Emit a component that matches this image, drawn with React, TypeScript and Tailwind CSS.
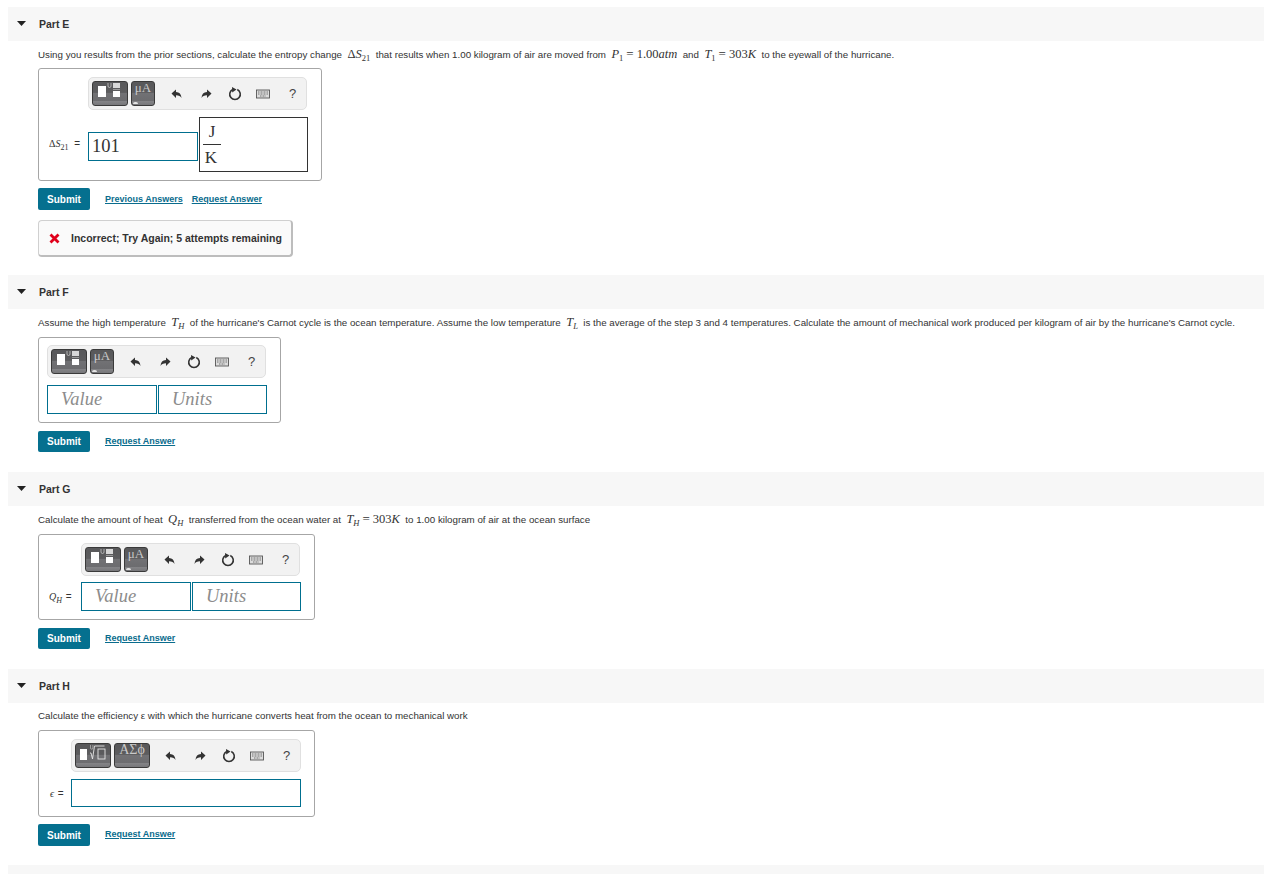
import type { ReactNode } from 'react'

const serif = 'font-["Liberation_Serif",serif]'

function V({ children, sub, upright }: { children: ReactNode; sub?: string; upright?: boolean }) {
    return (
        <span className={`${serif} italic text-[12.5px] text-[#333]`}>
            {children}
            {sub && <sub className={`text-[8.5px] align-[-1px] leading-none ${upright ? 'not-italic' : ''}`}>{sub}</sub>}
        </span>
    )
}

function Num({ children }: { children: ReactNode }) {
    return <span className={`${serif} text-[12.5px] text-[#333]`}>{children}</span>
}

function Eq() {
    return <span className={`${serif} mx-[3px] text-[13px] text-[#333]`}>=</span>
}

function TemplateIcon({ root }: { root?: boolean }) {
    if (root) {
        return (
            <svg width="36" height="25" viewBox="0 0 36 25" className="absolute left-0 top-0">
                <rect x="4" y="5" width="7" height="11" fill="#fff" />
                <path d="M14 9l1 0 1.500 6 2-13h10" stroke="#e6e6e6" strokeWidth="0.9" fill="none" />
                <rect x="22" y="5" width="7" height="10" fill="none" stroke="#e6e6e6" strokeWidth="0.9" />
                <path d="M14.500 1v3a1.200 1.200 0 0 0 2.400 0v-3" stroke="#d0d0d0" strokeWidth="0.6" fill="none" />
            </svg>
        )
    }
    return (
        <svg width="36" height="25" viewBox="0 0 36 25" className="absolute left-0 top-0">
            <rect x="5" y="4" width="8" height="11" fill="#fff" />
            <path d="M15 1v3a1.500 1.500 0 0 0 3 0v-3" stroke="#c8c8c8" strokeWidth="0.8" fill="none" />
            <rect x="20" y="1" width="7" height="5" fill="#d8d8d8" />
            <rect x="20" y="7" width="7" height="0.8" fill="#aaa" />
            <rect x="20" y="9" width="7" height="6" fill="#fff" />
        </svg>
    )
}

function PadButton({ className, children }: { className: string; children: ReactNode }) {
    return (
        <div className={`relative h-[25px] rounded-[3px] border border-[#3a3a3a] overflow-hidden bg-[linear-gradient(#58585a_0%,#5c5c5e_45%,#717174_50%,#6c6c6f_82%,#838386_84%,#77777a_100%)] ${className}`}>
            {children}
        </div>
    )
}

function Toolbar({ className, greek }: { className: string; greek?: boolean }) {
    return (
        <div className={`flex items-center h-[33px] pl-[3px] rounded-[5px] border border-[#e0e0e0] bg-[#f2f2f2] ${className}`}>
            <PadButton className="w-[36px] shrink-0">
                <TemplateIcon root={greek} />
            </PadButton>
            <PadButton className={`ml-[3px] shrink-0 ${greek ? 'w-[36px]' : 'w-[24px]'}`}>
                <span className={`${serif} absolute left-0 right-0 top-[-2px] text-center leading-[15px] text-[#c9c9c9] ${greek ? 'text-[14px]' : 'text-[13px]'}`}>
                    {greek ? 'ΑΣϕ' : 'μA'}
                </span>
                {!greek && <span className="absolute left-[1px] bottom-[1px] w-[5px] h-[2px] rounded-t-full bg-[#e4e4e4]" />}
            </PadButton>
            <div className={`flex items-center text-[#333] ${greek ? 'ml-[6px]' : 'ml-[7px]'}`}>
                <ToolIcon>
                    <path d="M1.500 6.500 6 2.500v2.600c3.400 0 5.200 2 5.500 6-1-2-2.600-2.900-5.500-2.900v2.800z" fill="#333" />
                </ToolIcon>
                <ToolIcon>
                    <path d="M12.500 6.500 8 2.500v2.600c-3.400 0-5.200 2-5.500 6 1-2 2.600-2.900 5.500-2.900v2.800z" fill="#333" />
                </ToolIcon>
                <ToolIcon>
                    <path d="M9.300 2.500a5.300 5.300 0 1 1-4.600 0" stroke="#333" strokeWidth="1.600" fill="none" />
                    <path d="M4 0 8.500 2.500 4.200 5.500z" fill="#333" />
                </ToolIcon>
                <ToolIcon shift>
                    <rect x="0.500" y="3" width="13" height="8" fill="#dcdcdc" stroke="#555" strokeWidth="0.900" />
                    <path d="M2 5h10M2 7h10M4 9h6" stroke="#666" strokeWidth="0.900" strokeDasharray="1 0.500" />
                </ToolIcon>
                <div className='w-[29px] text-center text-[13px] leading-none text-[#444] font-["Liberation_Sans",sans-serif]'>?</div>
            </div>
        </div>
    )
}

function ToolIcon({ children, shift }: { children: ReactNode; shift?: boolean }) {
    return (
        <div className={`w-[29px] flex justify-center ${shift ? 'pr-[2px]' : ''}`}>
            <svg width="14" height="14" viewBox="0 0 14 14">{children}</svg>
        </div>
    )
}

function Field({ className, placeholder, value }: { className: string; placeholder?: string; value?: string }) {
    return (
        <input
            readOnly
            placeholder={placeholder}
            defaultValue={value}
            className={`${serif} block h-[29px] border border-[#006f8f] bg-white text-[18.500px] text-[#333] outline-none placeholder:italic placeholder:text-[#8c8c8c] ${className}`}
        />
    )
}

function SubmitRow({ className, previous }: { className: string; previous?: boolean }) {
    return (
        <div className={`flex items-center ${className}`}>
            <button className="w-[52px] h-full rounded-[2px] bg-[#05708f] text-white text-[10px] font-bold">Submit</button>
            <a className={`ml-[15px] text-[9px] font-bold text-[#0a6c8d] underline ${previous ? 'mt-[1px]' : ''}`}>{previous ? 'Previous Answers' : 'Request Answer'}</a>
            {previous && <a className="ml-[9px] mt-[1px] text-[9px] font-bold text-[#0a6c8d] underline">Request Answer</a>}
        </div>
    )
}

function Section({ title, heightClass, promptClass, prompt, children }: {
    title: string
    heightClass: string
    promptClass: string
    prompt: ReactNode
    children: ReactNode
}) {
    return (
        <section className={heightClass}>
            <div className="flex items-center h-[34px] bg-[#f7f7f7]">
                <svg width="9" height="5" viewBox="0 0 9 5" className="ml-[9px] mb-[2px]">
                    <path d="M0 0h9L4.500 5z" fill="#222" />
                </svg>
                <span className="ml-[13px] pt-[2px] text-[10.500px] font-bold text-[#333]">{title}</span>
            </div>
            <div className="ml-[30px]">
                <div className={`pt-[5px] leading-[16px] whitespace-pre text-[9.750px] text-[#333] ${promptClass}`}>{prompt}</div>
                {children}
            </div>
        </section>
    )
}

function Label({ children }: { children: ReactNode }) {
    return <div className="flex items-center pl-[2px] text-[#333] shrink-0">{children}</div>
}

export default function App() {
    return (
        <div className='w-[1264px] h-[874px] overflow-hidden bg-white pt-[7px] pl-[8px] font-["Liberation_Sans",sans-serif]'>
            <Section
                title="Part E"
                heightClass="h-[268px]"
                promptClass="h-[27px]"
                prompt={
                    <>
                        Using you results from the prior sections, calculate the entropy change{'  '}
                        <Num>Δ</Num><V sub="21" upright>S</V>{'  '}that results when 1.00 kilogram of air are moved from{'  '}
                        <V sub="1" upright>P</V><Eq /><Num>1.00</Num><V>atm</V>{'  '}and{'  '}<V sub="1" upright>T</V><Eq /><Num>303</Num><V>K</V>{'  '}to the eyewall of the hurricane.
                    </>
                }
            >
                <div className="w-[284px] h-[113px] rounded-[3px] border border-[#a6a6a6] pt-[8px] px-[8px]">
                    <Toolbar className="ml-[41px] w-[219px]" />
                    <div className="flex items-start h-[55px] mt-[7px]">
                        <Label>
                            <div className="w-[39px] mt-[17px] text-[10px]"><Num><span className="text-[10px]">Δ</span></Num><span className={`${serif} italic`}>S<sub className="not-italic text-[8px] align-[-1px] leading-none">21</sub></span> <span className="ml-[3px]">=</span></div>
                        </Label>
                        <Field className="w-[110px] pl-[3px] mt-[15px]" value="101" />
                        <div className="ml-[1px] w-[109px] h-[55px] border border-[#333] pl-[3px] flex flex-col justify-center">
                            <div className={`${serif} w-[18px] text-[17px] leading-[25px] h-[26px] text-center text-[#333] border-b border-[#333]`}>J</div>
                            <div className={`${serif} w-[16px] text-[17px] leading-[25px] h-[25px] text-center text-[#333]`}>K</div>
                        </div>
                    </div>
                </div>
                <SubmitRow className="mt-[7px] h-[22px]" previous />
                <div className="mt-[10px] flex items-center w-[255px] h-[37px] rounded-[4px] border border-[#d0d0d0] border-r-2 border-b-2 border-r-[#bdbdbd] border-b-[#bdbdbd] bg-[#fafafa] pl-[10px]">
                    <svg width="11" height="11" viewBox="0 0 11 11" className="mt-[1px]">
                        <path d="M1.500 1.500l8 8M9.500 1.500l-8 8" stroke="#e0001b" strokeWidth="2.800" />
                    </svg>
                    <span className="ml-[11px] pt-[2px] text-[10.500px] font-bold text-[#333]">Incorrect; Try Again; 5 attempts remaining</span>
                </div>
            </Section>

            <Section
                title="Part F"
                heightClass="h-[197px]"
                promptClass="h-[28px]"
                prompt={
                    <>
                        Assume the high temperature{'  '}<V sub="H">T</V>{'  '}of the hurricane's Carnot cycle is the ocean temperature. Assume the low temperature{'  '}<V sub="L">T</V>{'  '}is the average of the step 3 and 4 temperatures. Calculate the amount of mechanical work produced per kilogram of air by the hurricane's Carnot cycle.
                    </>
                }
            >
                <div className="w-[243px] h-[86px] rounded-[3px] border border-[#a6a6a6] pt-[7px] px-[8px]">
                    <Toolbar className="w-[219px]" />
                    <div className="flex mt-[7px]">
                        <Field className="w-[110px] pl-[13px]" placeholder="Value" />
                        <Field className="ml-[1px] w-[109px] pl-[13px]" placeholder="Units" />
                    </div>
                </div>
                <SubmitRow className="mt-[8px] h-[21px]" />
            </Section>

            <Section
                title="Part G"
                heightClass="h-[197px]"
                promptClass="h-[28px]"
                prompt={
                    <>
                        Calculate the amount of heat{'  '}<V sub="H">Q</V>{'  '}transferred from the ocean water at{'  '}<V sub="H">T</V><Eq /><Num>303</Num><V>K</V>{'  '}to 1.00 kilogram of air at the ocean surface
                    </>
                }
            >
                <div className="w-[277px] h-[86px] rounded-[3px] border border-[#a6a6a6] pt-[8px] px-[8px]">
                    <Toolbar className="ml-[34px] w-[219px]" />
                    <div className="flex items-center mt-[6px]">
                        <Label>
                            <div className="w-[32px] text-[10px]"><span className={`${serif} italic`}>Q<sub className="text-[8px] align-[-1px] leading-none">H</sub></span> <span className="ml-[1px]">=</span></div>
                        </Label>
                        <Field className="w-[110px] pl-[13px]" placeholder="Value" />
                        <Field className="ml-[1px] w-[109px] pl-[13px]" placeholder="Units" />
                    </div>
                </div>
                <SubmitRow className="mt-[8px] h-[21px]" />
            </Section>

            <Section
                title="Part H"
                heightClass="h-[196px]"
                promptClass="h-[27px]"
                prompt={<>Calculate the efficiency ε with which the hurricane converts heat from the ocean to mechanical work</>}
            >
                <div className="w-[277px] h-[87px] rounded-[3px] border border-[#a6a6a6] pt-[8px] px-[8px]">
                    <Toolbar className="ml-[24px] w-[230px]" greek />
                    <div className="flex items-center mt-[7px]">
                        <Label>
                            <div className="w-[22px] pl-[1px] text-[10px]"><span className={`${serif} italic`}>ϵ</span> <span className="ml-[1px]">=</span></div>
                        </Label>
                        <Field className="w-[230px] !h-[28px]" />
                    </div>
                </div>
                <SubmitRow className="mt-[7px] h-[22px]" />
            </Section>

            <div className="h-[20px] bg-[#f7f7f7]" />
        </div>
    )
}
